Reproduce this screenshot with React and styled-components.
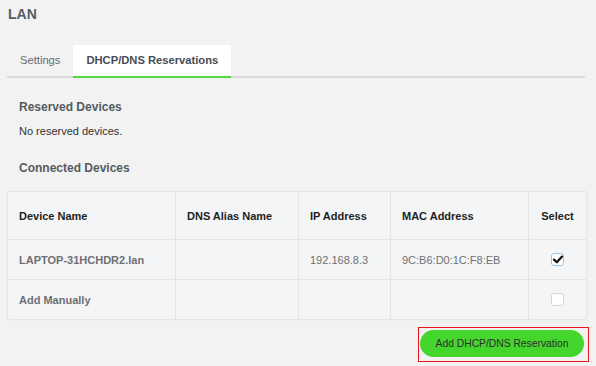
import React from "react";
import styled, { createGlobalStyle } from "styled-components";

const Global = createGlobalStyle`
  html, body { margin: 0; padding: 0; background: #f2f2f2; }
  body { font-family: "Liberation Sans", Arial, sans-serif; }
  * { box-sizing: border-box; }
`;

const Page = styled.div`
  width: 596px;
  height: 366px;
  padding: 0 11px 0 7px;
  background: #f2f2f2;
  overflow: hidden;
`;

const Title = styled.h1`
  margin: 6px 0 0 1px;
  font-size: 14px;
  line-height: 16px;
  font-weight: bold;
  color: #575d64;
`;

const TabBar = styled.div`
  display: flex;
  margin-top: 23px;
  box-shadow: inset 0 -2px 0 #d9d9d9;
`;

const Tab = styled.div`
  height: 33px;
  padding: 0 13px;
  line-height: 31px;
  font-size: 11.2px;
  font-weight: ${(p) => (p.$active ? "bold" : "normal")};
  color: ${(p) => (p.$active ? "#464d55" : "#666a70")};
  background: ${(p) => (p.$active ? "#ffffff" : "transparent")};
  border-bottom: 2px solid ${(p) => (p.$active ? "#4fd93a" : "transparent")};
`;

const Content = styled.div`
  padding-left: 12px;
`;

const SectionHeading = styled.h2`
  margin: ${(p) => p.$top}px 0 0;
  font-size: 12px;
  line-height: 16px;
  font-weight: bold;
  color: #555b62;
`;

const Note = styled.p`
  margin: 9px 0 0;
  font-size: 11px;
  line-height: 14px;
  color: #333;
`;

const Table = styled.table`
  margin-top: 15px;
  width: 578px;
  table-layout: fixed;
  border-collapse: separate;
  border-spacing: 0;
  background: #f4f5f7;
  border: 1px solid #e3e4e6;
  border-radius: 3px;
  box-shadow: 0 0 2px rgba(0, 0, 0, 0.06);
`;

const Th = styled.th`
  height: 48px;
  padding: 0 0 0 ${(p) => (p.$center ? 0 : 11)}px;
  text-align: ${(p) => (p.$center ? "center" : "left")};
  font-size: 11px;
  font-weight: bold;
  color: #1f1f1f;
  border-right: ${(p) => (p.$last ? "none" : "1px solid #e3e4e6")};
  border-bottom: 1px solid #e3e4e6;
`;

const Td = styled.td`
  height: ${(p) => p.$h}px;
  padding: 0 0 0 ${(p) => (p.$center ? 0 : 11)}px;
  text-align: ${(p) => (p.$center ? "center" : "left")};
  vertical-align: middle;
  font-size: 11px;
  font-weight: ${(p) => (p.$bold ? "bold" : "normal")};
  color: #6e7074;
  border-right: ${(p) => (p.$last ? "none" : "1px solid #e3e4e6")};
  border-bottom: ${(p) => (p.$bottom ? "none" : "1px solid #e3e4e6")};
`;

const Box = styled.span`
  display: inline-flex;
  align-items: center;
  justify-content: center;
  width: 13px;
  height: 13px;
  border-radius: 3px;
  background: #fff;
  border: 1px solid ${(p) => (p.$checked ? "#94c4e8" : "#d6d6d6")};
  vertical-align: middle;
`;

const ButtonRow = styled.div`
  display: flex;
  justify-content: flex-end;
  margin-top: 7px;
  margin-right: -4px;
`;

const Highlight = styled.div`
  border: 1px solid #e8161b;
  padding: 2px 4px 4px 1px;
`;

const Button = styled.button`
  width: 164px;
  height: 27px;
  border: none;
  border-radius: 14px;
  background: #44d62c;
  color: #2e2e2e;
  font-family: "Liberation Sans", Arial, sans-serif;
  font-size: 10.3px;
  padding: 0;
`;

const Check = ({ checked }) => (
  <Box $checked={checked}>
    {checked && (
      <svg width="10" height="9" viewBox="0 0 10 9">
        <path d="M1 4.6 L3.8 7.2 L9 1.6" fill="none" stroke="#111" strokeWidth="2.2" strokeLinecap="round" strokeLinejoin="round" />
      </svg>
    )}
  </Box>
);

export default function App() {
  return (
    <Page>
      <Global />
      <Title>LAN</Title>
      <TabBar>
        <Tab>Settings</Tab>
        <Tab $active>DHCP/DNS Reservations</Tab>
      </TabBar>
      <Content>
        <SectionHeading $top={21}>Reserved Devices</SectionHeading>
        <Note>No reserved devices.</Note>
        <SectionHeading $top={22}>Connected Devices</SectionHeading>
      </Content>
      <Table>
        <colgroup>
          <col style={{ width: 168 }} />
          <col style={{ width: 123 }} />
          <col style={{ width: 92 }} />
          <col style={{ width: 138 }} />
          <col style={{ width: 57 }} />
        </colgroup>
        <thead>
          <tr>
            <Th>Device Name</Th>
            <Th>DNS Alias Name</Th>
            <Th>IP Address</Th>
            <Th>MAC Address</Th>
            <Th $center $last>Select</Th>
          </tr>
        </thead>
        <tbody>
          <tr>
            <Td $h={40} $bold>LAPTOP-31HCHDR2.lan</Td>
            <Td $h={40}></Td>
            <Td $h={40}>192.168.8.3</Td>
            <Td $h={40}>9C:B6:D0:1C:F8:EB</Td>
            <Td $h={40} $center $last><Check checked /></Td>
          </tr>
          <tr>
            <Td $h={39} $bold $bottom>Add Manually</Td>
            <Td $h={39} $bottom></Td>
            <Td $h={39} $bottom></Td>
            <Td $h={39} $bottom></Td>
            <Td $h={39} $center $last $bottom><Check /></Td>
          </tr>
        </tbody>
      </Table>
      <ButtonRow>
        <Highlight>
          <Button>Add DHCP/DNS Reservation</Button>
        </Highlight>
      </ButtonRow>
    </Page>
  );
}
